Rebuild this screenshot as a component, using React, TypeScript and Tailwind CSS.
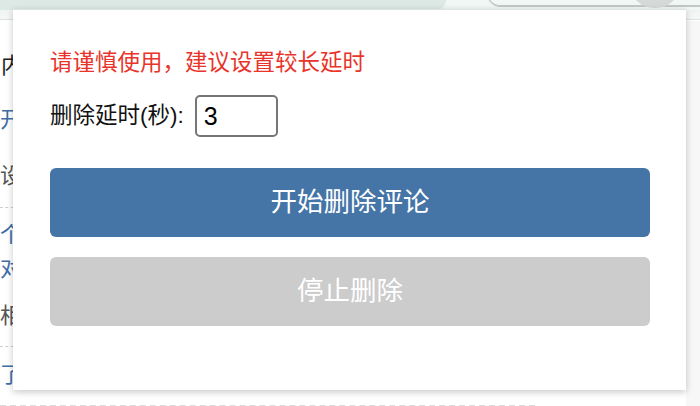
import React from "react";

const font = { fontFamily: '"Liberation Sans", "Noto Sans CJK SC", sans-serif' };

export default function App() {
  return (
    <div className="relative w-[700px] h-[406px] overflow-hidden bg-white" style={font}>
      {/* background page top strip */}
      <div className="relative h-[10px] bg-[#f1f7f4]">
        <div className="absolute left-0 top-0 w-[446px] h-[10px] bg-[#dce9e4] rounded-br-[16px]" />
        <div className="absolute left-[487px] top-[-20px] w-[260px] h-[27px] rounded-[14px] border-b-[2px] border-l-[1px] border-[#c3c8c6] bg-[#f1f7f4]" />
        <div className="absolute left-[630px] top-[-40px] w-[50px] h-[48px] rounded-full bg-[#d5dad8]" />
      </div>
      <div className="h-[10px] bg-gradient-to-b from-[#eef3f1] to-[#f6f8f7] border-b border-[#dde2e0]" />

      {/* background page content at left */}
      <div className="flex flex-col text-[22px] leading-[24px]">
        <div className="mt-[34px] ml-[1px] text-[#222]">内容</div>
        <div className="mt-[30px] text-[#3e6ea5]">开始</div>
        <div className="mt-[32px] text-[#555]">设置</div>
        <div className="mt-[19px] w-[40px] border-t border-dashed border-[#cfcfcf]" />
        <div className="mt-[15px] text-[#3e6ea5]">个人</div>
        <div className="mt-[10px] text-[#3e6ea5]">对话</div>
        <div className="mt-[23px] text-[#555]">相关</div>
        <div className="mt-[18px] w-[40px] border-t border-dashed border-[#cfcfcf]" />
        <div className="mt-[16px] text-[#3e6ea5]">了解</div>
        <div className="mt-[18px] w-[535px] border-t-[2px] border-dashed border-[#dcdcdc]" />
      </div>
      <div className="absolute right-0 top-[21px] w-[14px] h-[385px] bg-[#f7f7f7]" />

      {/* popup card */}
      <div className="absolute left-[13px] top-[9px] w-[673px] h-[381px] bg-white border-t border-[#dfe3e1] shadow-[0_2px_7px_rgba(0,0,0,0.22)] pl-[37px] pr-[36px] pt-[40px]">
        <div className="text-[22.5px] leading-[26px] text-[#e8342b]">请谨慎使用，建议设置较长延时</div>
        <div className="mt-[19px] flex items-center gap-[11px] text-[22.5px] text-[#111]">
          <span>删除延时(秒):</span>
          <input
            defaultValue="3"
            className="w-[83px] h-[42px] border-[2px] border-[#767676] rounded-[5px] px-[7px] text-[25px] text-black outline-none"
            style={font}
          />
        </div>
        <button className="mt-[31px] w-[600px] h-[69px] rounded-[6px] bg-[#4575a7] text-white text-[26.5px] flex items-center justify-center">
          开始删除评论
        </button>
        <button className="mt-[20px] w-[600px] h-[69px] rounded-[6px] bg-[#cccccc] text-white text-[26.5px] flex items-center justify-center">
          停止删除
        </button>
      </div>
    </div>
  );
}
